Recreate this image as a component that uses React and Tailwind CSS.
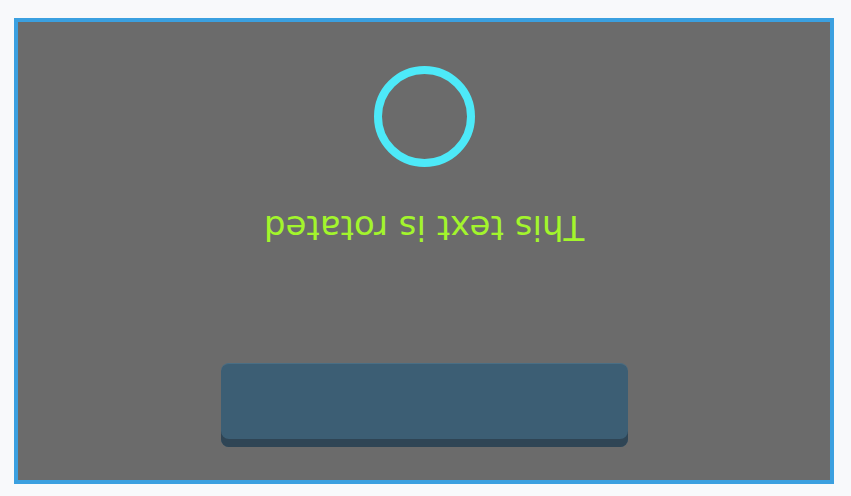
import React from "react";

export default function App() {
  return (
    <div className="w-[851px] h-[496px] bg-[#f8f9fb] pt-[18px] pl-[14px]">
      <div className="w-[820px] h-[466px] border-4 border-[#3ba0e0] bg-[#6b6b6b] flex flex-col items-center pt-[44px]">
        <div className="w-[101px] h-[101px] rounded-full border-[8px] border-[#4de9f8] shrink-0" />
        <div
          className="mt-[41px] rotate-180 text-[34px] leading-[40px] text-[#a3f52c] whitespace-nowrap"
          style={{ fontFamily: '"DejaVu Sans", Verdana, sans-serif' }}
        >
          This text is rotated
        </div>
        <div className="mt-[115px] w-[407px] h-[84px] rounded-lg bg-[#3c5e74] border-t border-[#4a6e84] shadow-[inset_0_-8px_0_#2f4555]" />
      </div>
    </div>
  );
}
